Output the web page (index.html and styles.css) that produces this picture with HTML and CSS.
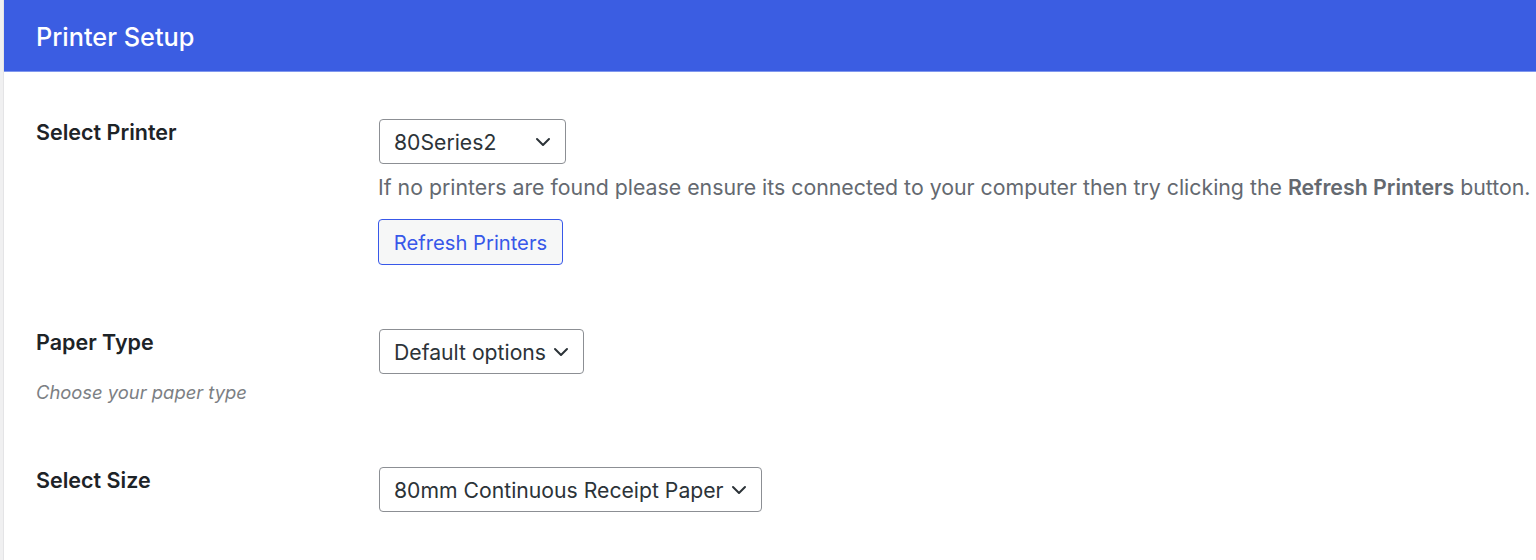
FILE: index.html
```html
<!DOCTYPE html>
<html lang="en">
<head>
<meta charset="utf-8">
<title>Printer Setup</title>
<link rel="stylesheet" href="styles.css">
</head>
<body>
<div class="page">
  <div class="strip"></div>
  <main class="panel">
    <header class="panel-header">
      <h1 class="panel-title">Printer Setup</h1>
    </header>
    <section class="form">
      <div class="row row-first">
        <div class="label-col">
          <div class="label">Select Printer</div>
        </div>
        <div class="field-col">
          <div class="select w-printer">
            <span class="select-text">80Series2</span>
            <svg class="chev" viewBox="0 0 16 10" width="16" height="10"><path d="M2 2 L8 8 L14 2" fill="none" stroke="currentColor" stroke-width="2" stroke-linecap="round" stroke-linejoin="round"/></svg>
          </div>
          <p class="help">If no printers are found please ensure its connected to your computer then try clicking the <strong>Refresh Printers</strong> button.</p>
          <button class="btn" type="button">Refresh Printers</button>
        </div>
      </div>
      <div class="row">
        <div class="label-col">
          <div class="label">Paper Type</div>
          <div class="label-desc">Choose your paper type</div>
        </div>
        <div class="field-col">
          <div class="select w-paper">
            <span class="select-text">Default options</span>
            <svg class="chev" viewBox="0 0 16 10" width="16" height="10"><path d="M2 2 L8 8 L14 2" fill="none" stroke="currentColor" stroke-width="2" stroke-linecap="round" stroke-linejoin="round"/></svg>
          </div>
        </div>
      </div>
      <div class="row row-last">
        <div class="label-col">
          <div class="label">Select Size</div>
        </div>
        <div class="field-col">
          <div class="select w-size">
            <span class="select-text">80mm Continuous Receipt Paper</span>
            <svg class="chev" viewBox="0 0 16 10" width="16" height="10"><path d="M2 2 L8 8 L14 2" fill="none" stroke="currentColor" stroke-width="2" stroke-linecap="round" stroke-linejoin="round"/></svg>
          </div>
        </div>
      </div>
    </section>
  </main>
</div>
</body>
</html>
```

FILE: styles.css
```css
* { box-sizing: border-box; }
html, body {
  margin: 0;
  padding: 0;
  height: 100%;
  background: #ffffff;
  font-family: Inter, "Noto Sans", "Liberation Sans", sans-serif;
  color: #1d2327;
}
.page {
  display: flex;
  min-height: 560px;
}
.strip {
  width: 4px;
  flex: 0 0 4px;
  background: #f0f0f1;
  border-right: 1px solid #e4e4e6;
}
.panel {
  flex: 1;
  background: #ffffff;
}
.panel-header {
  height: 72px;
  background: #3b5de2;
  border-bottom: 1px solid #7f97ee;
  display: flex;
  align-items: center;
  padding-left: 32px;
}
.panel-title {
  margin: 0;
  font-size: 25.3px;
  font-weight: 500;
  color: #ffffff;
  padding-top: 2px;
}
.form {
  padding-left: 32px;
}
.row {
  display: flex;
  align-items: flex-start;
  padding-top: 64px;
}
.row-first {
  padding-top: 47px;
}
.row-last {
  padding-top: 63px;
}
.label-col {
  width: 343px;
  flex: 0 0 343px;
}
.label {
  font-size: 21.5px;
  font-weight: 600;
  line-height: 27px;
  color: #1d2327;
}
.label-desc {
  margin-top: 24px;
  font-size: 18.4px;
  line-height: 24px;
  font-style: italic;
  color: #7c7f84;
}
.field-col {
  display: flex;
  flex-direction: column;
  align-items: flex-start;
}
.select {
  height: 45px;
  border: 1px solid #8c8f94;
  border-radius: 4px;
  background: #ffffff;
  display: flex;
  align-items: center;
  justify-content: space-between;
  padding: 0 14px 0 14px;
  font-size: 21.2px;
  color: #2c3338;
}
.select-text {
  white-space: nowrap;
}
.chev {
  color: #2c3338;
  flex: 0 0 auto;
}
.w-printer { width: 187px; }
.w-paper { width: 205px; }
.w-size { width: 383px; }
.help {
  margin: 10px 0 0 -1px;
  font-size: 21.3px;
  line-height: 27px;
  color: #646970;
  white-space: nowrap;
}
.help strong {
  font-weight: 600;
}
.btn {
  margin: 18px 0 0 -1px;
  height: 46px;
  width: 185px;
  border: 1px solid #3858e9;
  border-radius: 4px;
  background: #f6f7f7;
  color: #3858e9;
  font-family: inherit;
  font-size: 20.2px;
  padding: 0;
}
```
